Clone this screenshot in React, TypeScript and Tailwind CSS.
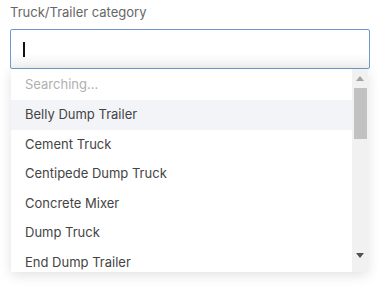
import React from "react";

const items = [
  "Belly Dump Trailer",
  "Cement Truck",
  "Centipede Dump Truck",
  "Concrete Mixer",
  "Dump Truck",
  "End Dump Trailer",
];

export default function App() {
  return (
    <div
      className="w-[392px] h-[289px] bg-white relative overflow-hidden"
      style={{ fontFamily: "Inter, 'Noto Sans', sans-serif" }}
    >
      <div className="pl-[10px] pt-[3px] w-[370px]">
        <div className="text-[13px] leading-[18px] text-[#666666] h-[26px]">Truck/Trailer category</div>
        <div className="h-[40px] border border-[#6b9bc6] rounded-[2px] bg-gradient-to-b from-white from-60% to-[#f2f2f2] flex items-center pl-[12px]">
          <div className="w-[1.5px] h-[15px] bg-[#111]" />
        </div>
        <div className="ml-[1px] w-[357px] h-[203px] bg-white shadow-[0_3px_12px_rgba(0,0,0,0.12)] flex">
          <div className="flex-1 overflow-hidden">
            <div className="h-[31px] pl-[14px] flex items-center text-[13px] text-[#b0b0b0]">Searching...</div>
            {items.map((t, i) => (
              <div
                key={t}
                className={
                  "h-[29.5px] pl-[14px] flex items-center text-[13px] text-[#444444] " +
                  (i === 0 ? "bg-[#f3f4f7]" : "")
                }
              >
                {t}
              </div>
            ))}
          </div>
          <div className="w-[16px] bg-[#f1f1f1] flex flex-col items-center">
            <div className="h-[19px] flex items-center justify-center">
              <svg width="8" height="5" viewBox="0 0 8 5"><path d="M4 0L8 5H0z" fill="#a3a3a3" /></svg>
            </div>
            <div className="w-[13px] h-[51px] bg-[#c1c1c1]" />
            <div className="flex-1" />
            <div className="h-[24px] flex items-start pt-[5px] justify-center">
              <svg width="8" height="5" viewBox="0 0 8 5"><path d="M0 0H8L4 5z" fill="#505050" /></svg>
            </div>
          </div>
        </div>
      </div>
    </div>
  );
}
